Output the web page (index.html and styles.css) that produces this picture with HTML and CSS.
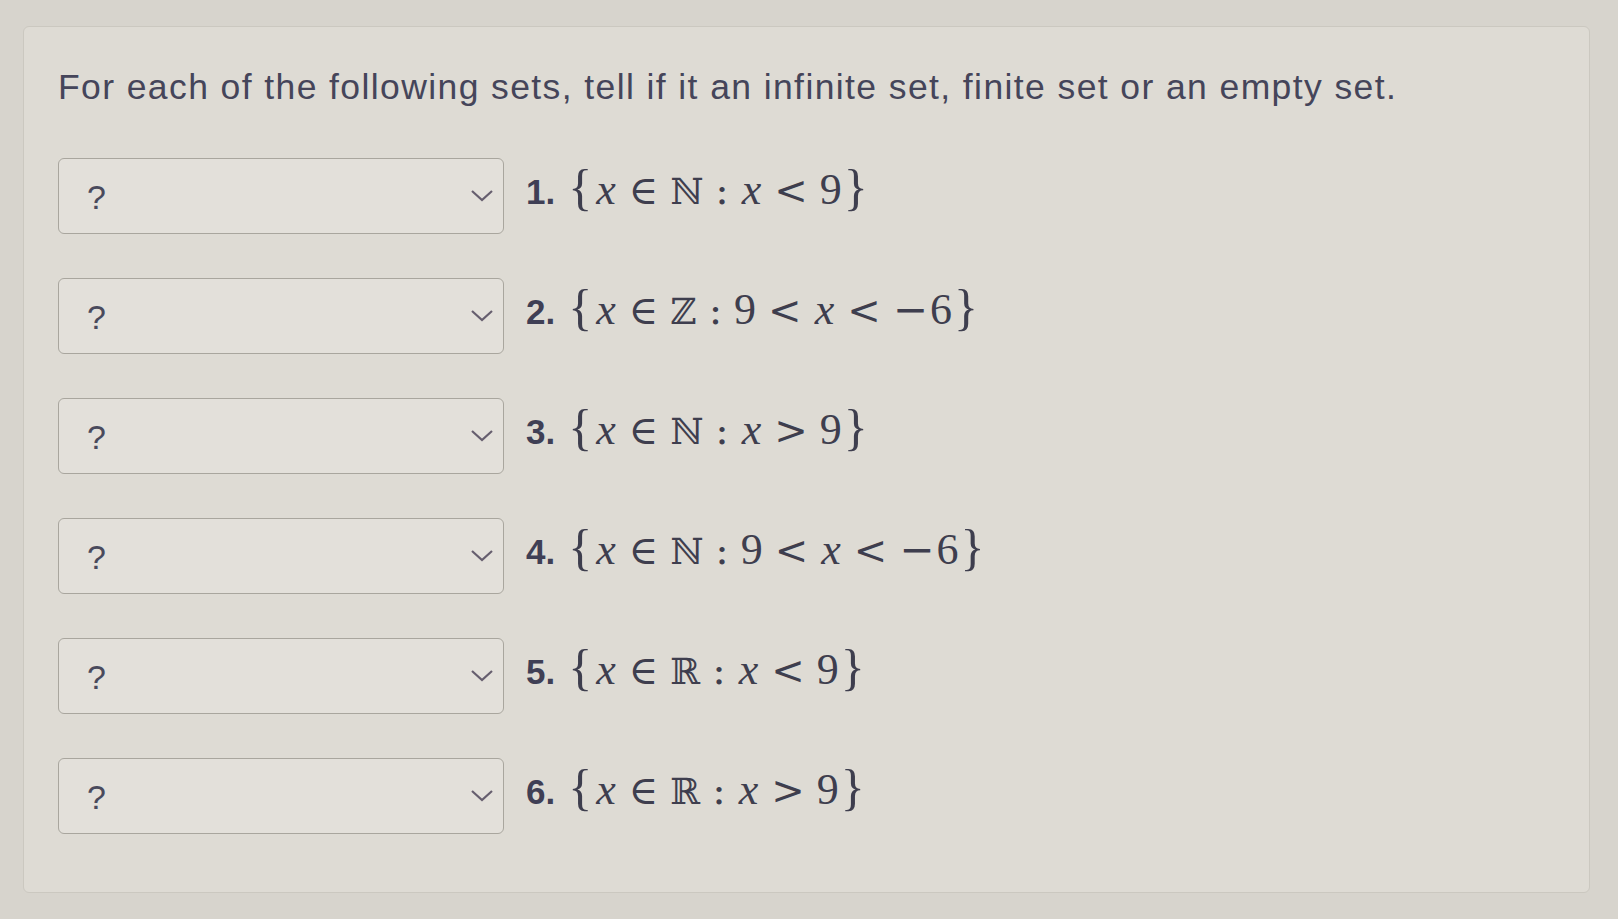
FILE: index.html
```html
<!DOCTYPE html>
<html>
<head>
<meta charset="utf-8">
<link rel="stylesheet" href="styles.css">
</head>
<body>
<div class="panel">
  <p class="prompt">For each of the following sets, tell if it an infinite set, finite set or an empty set.</p>
  <div class="rows">
    <div class="row">
      <div class="select"><span class="q">?</span><svg class="chev" viewBox="0 0 22 12"><path d="M1 1 L11 10 L21 1"/></svg></div>
      <div class="label"><b>1.</b><span class="m"><span class="br">{</span><i>x</i><span class="rel">∈</span><span class="bb">ℕ</span><span class="rel">:</span><i>x</i><span class="rel">&lt;</span>9<span class="br">}</span></span></div>
    </div>
    <div class="row">
      <div class="select"><span class="q">?</span><svg class="chev" viewBox="0 0 22 12"><path d="M1 1 L11 10 L21 1"/></svg></div>
      <div class="label"><b>2.</b><span class="m"><span class="br">{</span><i>x</i><span class="rel">∈</span><span class="bb">ℤ</span><span class="rel">:</span>9<span class="rel">&lt;</span><i>x</i><span class="rel">&lt;</span><span class="minus">−</span>6<span class="br">}</span></span></div>
    </div>
    <div class="row">
      <div class="select"><span class="q">?</span><svg class="chev" viewBox="0 0 22 12"><path d="M1 1 L11 10 L21 1"/></svg></div>
      <div class="label"><b>3.</b><span class="m"><span class="br">{</span><i>x</i><span class="rel">∈</span><span class="bb">ℕ</span><span class="rel">:</span><i>x</i><span class="rel">&gt;</span>9<span class="br">}</span></span></div>
    </div>
    <div class="row">
      <div class="select"><span class="q">?</span><svg class="chev" viewBox="0 0 22 12"><path d="M1 1 L11 10 L21 1"/></svg></div>
      <div class="label"><b>4.</b><span class="m"><span class="br">{</span><i>x</i><span class="rel">∈</span><span class="bb">ℕ</span><span class="rel">:</span>9<span class="rel">&lt;</span><i>x</i><span class="rel">&lt;</span><span class="minus">−</span>6<span class="br">}</span></span></div>
    </div>
    <div class="row">
      <div class="select"><span class="q">?</span><svg class="chev" viewBox="0 0 22 12"><path d="M1 1 L11 10 L21 1"/></svg></div>
      <div class="label"><b>5.</b><span class="m"><span class="br">{</span><i>x</i><span class="rel">∈</span><span class="bb">ℝ</span><span class="rel">:</span><i>x</i><span class="rel">&lt;</span>9<span class="br">}</span></span></div>
    </div>
    <div class="row">
      <div class="select"><span class="q">?</span><svg class="chev" viewBox="0 0 22 12"><path d="M1 1 L11 10 L21 1"/></svg></div>
      <div class="label"><b>6.</b><span class="m"><span class="br">{</span><i>x</i><span class="rel">∈</span><span class="bb">ℝ</span><span class="rel">:</span><i>x</i><span class="rel">&gt;</span>9<span class="br">}</span></span></div>
    </div>
  </div>
</div>
</body>
</html>
```

FILE: styles.css
```css
html, body {
  margin: 0;
  padding: 0;
}
body {
  background: #d7d4cd;
  width: 1618px;
  height: 919px;
  overflow: hidden;
  font-family: "Liberation Sans", Arial, sans-serif;
  color: #464658;
}
.panel {
  box-sizing: border-box;
  margin: 26px 28px 0 23px;
  height: 867px;
  background: #dedbd4;
  border: 1px solid #cbc8c0;
  border-radius: 6px;
  padding: 40px 0 0 34px;
}
.prompt {
  margin: 0;
  font-size: 35.5px;
  letter-spacing: 1.4px;
  line-height: 40px;
  color: #45455a;
}
.rows {
  margin-top: 51px;
  display: flex;
  flex-direction: column;
  gap: 44px;
}
.row {
  display: flex;
  align-items: center;
  gap: 22px;
}
.select {
  box-sizing: border-box;
  width: 446px;
  height: 76px;
  border: 1.5px solid #a9a69e;
  border-radius: 6px;
  background: #e3e0da;
  display: flex;
  align-items: center;
  justify-content: space-between;
  padding: 0 10px 0 28px;
}
.q {
  font-size: 34px;
  color: #4a4a5c;
  padding-top: 2px;
}
.chev {
  width: 22px;
  height: 12px;
}
.chev path {
  fill: none;
  stroke: #665e6e;
  stroke-width: 2.2;
}
.label {
  display: flex;
  align-items: baseline;
  gap: 13px;
  padding-bottom: 18px;
}
.label b {
  font-family: "Liberation Sans", Arial, sans-serif;
  font-size: 35px;
  font-weight: bold;
  color: #3f3f55;
}
.m {
  font-family: "Liberation Serif", "DejaVu Serif", serif;
  font-size: 44px;
  color: #3e3e4e;
  white-space: nowrap;
}
.m i {
  font-style: italic;
  margin: 0 1px;
}
.br {
  font-size: 50px;
}
.br:first-child {
  margin-right: 3px;
}
.br:last-child {
  margin-left: 2px;
}
.rel {
  margin: 0 12px;
  font-family: "DejaVu Serif", serif;
  font-size: 40px;
}
.minus {
  font-family: "DejaVu Serif", serif;
  font-size: 42px;
  margin-right: 2px;
}
.bb {
  font-family: "DejaVu Serif", serif;
  font-size: 36px;
}
```
